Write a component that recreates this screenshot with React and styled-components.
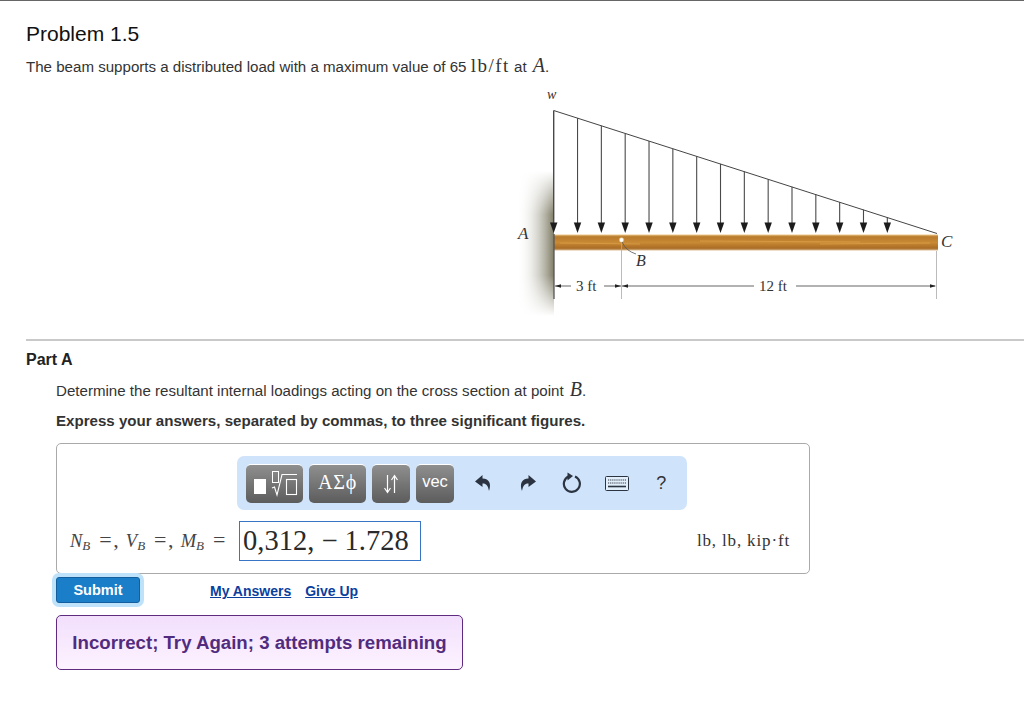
import React from "react";
import styled, { createGlobalStyle } from "styled-components";

const Global = createGlobalStyle`
  html, body { margin: 0; padding: 0; background: #fff; }
  body { font-family: "Liberation Sans", Arial, sans-serif; color: #333; }
`;
const Page = styled.div`
  width: 1024px;
  height: 702px;
  overflow: hidden;
  border-top: 1px solid #666;
  box-sizing: border-box;
`;
const Header = styled.header`
  padding-left: 26px;
`;
const Title = styled.h1`
  margin: 21px 0 0;
  font-size: 21px;
  line-height: 24px;
  font-weight: 400;
  color: #111;
`;
const Description = styled.p`
  margin: 10px 0 0;
  height: 21px;
  font-size: 15.1px;
  line-height: 21px;
  color: #333;
`;
const Math = styled.span`
  font-family: "Liberation Serif", serif;
  font-size: ${(p) => (p.$roman ? 19 : 20)}px;
  font-style: ${(p) => (p.$roman ? "normal" : "italic")};
  letter-spacing: ${(p) => (p.$roman ? "1.5px" : "0")};
  margin-left: ${(p) => (p.$roman ? "0" : "2px")};
  line-height: 0;
  color: #333;
`;
const FigureRow = styled.figure`
  margin: 4px 0 0 500px;
  width: 470px;
  height: 240px;
  svg { display: block; }
`;
const Divider = styled.hr`
  margin: 18px 0 0 26px;
  border: 0;
  height: 2px;
  background: #c9c9c9;
`;
const Part = styled.section`
  padding-left: 26px;
`;
const PartTitle = styled.h2`
  margin: 10px 0 0;
  font-size: 16px;
  line-height: 18px;
  font-weight: 700;
  color: #222;
`;
const Body = styled.div`
  padding-left: 30px;
`;
const Prompt = styled.p`
  margin: ${(p) => p.$top}px 0 0;
  height: 20px;
  font-size: 15.1px;
  line-height: 20px;
  font-weight: ${(p) => (p.$bold ? 700 : 400)};
  color: #333;
`;
const AnswerBox = styled.div`
  margin-top: 12px;
  width: 754px;
  height: 131px;
  box-sizing: border-box;
  border: 1px solid #aaa;
  border-radius: 5px;
  padding-top: 12px;
`;
const Toolbar = styled.div`
  margin-left: 180px;
  width: 450px;
  height: 54px;
  box-sizing: border-box;
  background: #cfe4fb;
  border-radius: 7px;
  display: flex;
  align-items: center;
  padding-left: 9px;
`;
const ToolButton = styled.div`
  width: ${(p) => p.$w}px;
  height: 39px;
  margin-right: ${(p) => p.$gap}px;
  padding-bottom: ${(p) => p.$lift || 0}px;
  box-sizing: border-box;
  border-radius: 5px;
  border-top: 1px solid #fff;
  background: linear-gradient(#8f8f8f, #5c5c5c);
  color: #fff;
  display: flex;
  align-items: center;
  justify-content: center;
  font-family: ${(p) => (p.$serif ? '"Liberation Serif", serif' : '"Liberation Sans", sans-serif')};
  font-size: ${(p) => p.$fs || 15}px;
  letter-spacing: ${(p) => (p.$serif ? "0.8px" : "0")};
`;
const ToolActions = styled.div`
  display: flex;
  align-items: center;
  margin-left: 7px;
`;
const ActionIcon = styled.div`
  width: 44.5px;
  height: 39px;
  display: flex;
  align-items: center;
  justify-content: center;
  font-size: 18px;
  color: #333;
`;
const InputRow = styled.div`
  display: flex;
  align-items: center;
  margin-top: 11px;
  padding: 0 19px 0 13px;
`;
const EqLabel = styled.div`
  width: 169px;
  font-family: "Liberation Serif", serif;
  font-size: 18.5px;
  font-style: italic;
  color: #444;
  white-space: nowrap;
  sub { font-size: 13px; vertical-align: -3px; line-height: 0; margin-right: 9px; }
`;
const Eq = styled.span`
  font-style: normal;
  font-size: 22px;
  line-height: 0;
  letter-spacing: 1.5px;
  margin-right: 1px;
`;
const AnswerInput = styled.div`
  width: 182px;
  height: 40px;
  box-sizing: border-box;
  border: 1px solid #3a74c4;
  padding-left: 3px;
  font-family: "Liberation Serif", serif;
  font-size: 28.5px;
  line-height: 38px;
  color: #2a2a2a;
  white-space: nowrap;
`;
const Units = styled.div`
  margin-left: auto;
  font-family: "Liberation Serif", serif;
  font-size: 17px;
  letter-spacing: 0.85px;
  color: #333;
`;
const Actions = styled.div`
  display: flex;
  align-items: center;
  margin-top: 3px;
  height: 26px;
`;
const Submit = styled.button`
  width: 84px;
  height: 26px;
  box-sizing: border-box;
  padding: 0;
  border: 1px solid #135f9d;
  border-radius: 3px;
  background: #1a7ec8;
  color: #fff;
  font: 700 14.5px "Liberation Sans", sans-serif;
  box-shadow: 0 0 0 4px #bfe2fb;
`;
const Links = styled.div`
  display: flex;
  gap: 14px;
  margin-left: 70px;
  padding-top: 2px;
`;
const TextLink = styled.a`
  font-size: 14px;
  font-weight: 700;
  color: #0b3f9e;
  text-decoration: underline;
`;
const Alert = styled.div`
  margin-top: 12px;
  width: 407px;
  height: 55px;
  box-sizing: border-box;
  border: 1px solid #5f2b80;
  border-radius: 5px;
  background: linear-gradient(#f2dffc, #fdf3ff);
  display: flex;
  align-items: center;
  justify-content: center;
  font-size: 18.65px;
  font-weight: 700;
  color: #512c7e;
  white-space: nowrap;
`;

const arrowXs = Array.from({ length: 15 }, (_, i) => 553.7 + i * 23.83);

const BeamFigure = () => (
  <svg width="470" height="240" viewBox="500 80 470 240">
    <defs>
      <linearGradient id="wallH" x1="0" x2="1" y1="0" y2="0">
        <stop offset="0" stopColor="#fff" stopOpacity="0" />
        <stop offset="1" stopColor="#77745c" stopOpacity="0.95" />
      </linearGradient>
      <linearGradient id="wallFade" x1="0" x2="0" y1="0" y2="1">
        <stop offset="0" stopColor="#fff" stopOpacity="1" />
        <stop offset="0.3" stopColor="#fff" stopOpacity="0" />
        <stop offset="0.72" stopColor="#fff" stopOpacity="0" />
        <stop offset="1" stopColor="#fff" stopOpacity="1" />
      </linearGradient>
      <linearGradient id="wood" x1="0" x2="0" y1="0" y2="1">
        <stop offset="0" stopColor="#eec98a" />
        <stop offset="0.14" stopColor="#b97b2c" />
        <stop offset="0.5" stopColor="#c88a34" />
        <stop offset="0.86" stopColor="#a96c24" />
        <stop offset="1" stopColor="#dcbc94" />
      </linearGradient>
      <filter id="soft"><feGaussianBlur stdDeviation="0.35" /></filter>
    </defs>
    <rect x="517" y="170" width="37" height="145" fill="url(#wallH)" />
    <rect x="517" y="170" width="37" height="145" fill="url(#wallFade)" />
    <g filter="url(#soft)">
      <rect x="554" y="233.5" width="384" height="16" fill="url(#wood)" />
      <g stroke="#dfa24a" strokeWidth="1" opacity="0.7">
        <line x1="560" y1="242" x2="640" y2="243" />
        <line x1="700" y1="240" x2="860" y2="241" />
        <line x1="820" y1="243" x2="930" y2="242" />
      </g>
      <line x1="553.7" y1="109.5" x2="937" y2="232.5" stroke="#444" strokeWidth="1" />
      {arrowXs.map((x, i) => (
        <g key={x}>
          <line x1={x} y1={109.5 + i * 7.63} x2={x} y2="224" stroke="#4a4a4a" strokeWidth={i === 0 ? 1.4 : 1.1} />
          <polygon points={`${x - 3.7},221.5 ${x + 3.7},221.5 ${x},232`} fill="#1c1c1c" />
        </g>
      ))}
      <line x1="554" y1="233" x2="554" y2="298" stroke="#555" strokeWidth="1.3" />
      <line x1="621.5" y1="240" x2="621.5" y2="298" stroke="#aaa" strokeWidth="0.8" />
      <line x1="936.5" y1="250" x2="936.5" y2="298" stroke="#aaa" strokeWidth="0.8" />
      <circle cx="621.5" cy="239" r="2.4" fill="#fff" stroke="#c89030" strokeWidth="0.5" />
      <path d="M622 241 Q626 250 636 253" fill="none" stroke="#555" strokeWidth="0.8" />
      <g stroke="#555" strokeWidth="0.9">
        <line x1="555" y1="285" x2="571" y2="285" />
        <line x1="604" y1="285" x2="621" y2="285" />
        <line x1="622" y1="285" x2="754" y2="285" />
        <line x1="796" y1="285" x2="935" y2="285" />
      </g>
      <g fill="#222">
        <polygon points="555,285 561,283.3 561,286.7" />
        <polygon points="621,285 615,283.3 615,286.7" />
        <polygon points="622,285 628,283.3 628,286.7" />
        <polygon points="936,285 930,283.3 930,286.7" />
      </g>
    </g>
    <g fontFamily="'Liberation Serif', serif" fill="#333">
      <text x="547" y="98" fontSize="14" fontStyle="italic">w</text>
      <text x="518" y="238" fontSize="17" fontStyle="italic">A</text>
      <text x="941" y="246" fontSize="17" fontStyle="italic">C</text>
      <text x="636" y="265" fontSize="16" fontStyle="italic">B</text>
      <text x="576" y="290" fontSize="15">3 ft</text>
      <text x="759" y="290" fontSize="15">12 ft</text>
    </g>
  </svg>
);

const TemplateIcon = () => (
  <svg width="57" height="38" viewBox="0 1 57 38" fill="none" stroke="#fff">
    <rect x="8" y="15" width="12" height="15" fill="#fff" stroke="none" />
    <rect x="26.5" y="7.5" width="6" height="11" strokeWidth="1" />
    <path d="M26 24 L28.5 23 L31 31 L36 10.5 H51" strokeWidth="1.1" />
    <rect x="40.5" y="15.5" width="10" height="15" strokeWidth="1.1" />
  </svg>
);
const ArrowsIcon = () => (
  <svg width="16" height="20" viewBox="0 0 16 20" fill="none" stroke="#fff" strokeWidth="1.2">
    <path d="M4.5 1 V18 M1.5 14 L4.5 18.5 L7.5 14" />
    <path d="M11.5 19 V2 M8.5 6 L11.5 1.5 L14.5 6" />
  </svg>
);
const Undo = () => (
  <svg width="18" height="20" viewBox="0 0 18 20">
    <path d="M8.5 2 L1 8.5 L8.5 14 V10.5 C12 10.3 14 12.5 15 18 C17.5 11 15.5 6 8.5 5.6 Z" fill="#2b3440" />
  </svg>
);
const Redo = () => (
  <svg width="18" height="20" viewBox="0 0 18 20">
    <path d="M9.5 2 L17 8.5 L9.5 14 V10.5 C6 10.3 4 12.5 3 18 C0.5 11 2.5 6 9.5 5.6 Z" fill="#2b3440" />
  </svg>
);
const Refresh = () => (
  <svg width="20" height="22" viewBox="0 0 20 22" fill="none">
    <path d="M6.5 4.6 A8 8 0 1 0 13 4.5" stroke="#2b3440" strokeWidth="2.2" />
    <path d="M5.5 0.5 L11 4 L5.5 8.5 Z" fill="#2b3440" />
  </svg>
);
const Keyboard = () => (
  <svg width="24" height="15" viewBox="0 0 24 15" fill="none">
    <rect x="0.5" y="0.5" width="23" height="14" rx="1" fill="#e3eefb" stroke="#2b3440" />
    <path d="M3 4 H21 M3 7 H21" stroke="#2b3440" strokeWidth="1.2" strokeDasharray="1.2 0.9" />
    <path d="M3 10.5 H21" stroke="#2b3440" strokeWidth="1.6" />
  </svg>
);

export default function App() {
  return (
    <Page>
      <Global />
      <Header>
        <Title>Problem 1.5</Title>
        <Description>
          The beam supports a distributed load with a maximum value of 65{" "}
          <Math $roman>lb/ft</Math> at <Math>A</Math>.
        </Description>
      </Header>
      <FigureRow>
        <BeamFigure />
      </FigureRow>
      <Divider />
      <Part>
        <PartTitle>Part A</PartTitle>
        <Body>
          <Prompt $top={12}>
            Determine the resultant internal loadings acting on the cross section at point <Math>B</Math>.
          </Prompt>
          <Prompt $top={10} $bold>
            Express your answers, separated by commas, to three significant figures.
          </Prompt>
          <AnswerBox>
            <Toolbar>
              <ToolButton $w={57} $gap={6}><TemplateIcon /></ToolButton>
              <ToolButton $w={57} $gap={6} $serif $fs={20} $lift={2}>ΑΣϕ</ToolButton>
              <ToolButton $w={38} $gap={6}><ArrowsIcon /></ToolButton>
              <ToolButton $w={38} $gap={0} $fs={16.5} $lift={4}>vec</ToolButton>
              <ToolActions>
                <ActionIcon><Undo /></ActionIcon>
                <ActionIcon><Redo /></ActionIcon>
                <ActionIcon><Refresh /></ActionIcon>
                <ActionIcon><Keyboard /></ActionIcon>
                <ActionIcon>?</ActionIcon>
              </ToolActions>
            </Toolbar>
            <InputRow>
              <EqLabel>
                N<sub>B</sub><Eq>=,</Eq> V<sub>B</sub><Eq>=,</Eq> M<sub>B</sub><Eq>=</Eq>
              </EqLabel>
              <AnswerInput>0,312, − 1.728</AnswerInput>
              <Units>lb, lb, kip·ft</Units>
            </InputRow>
          </AnswerBox>
          <Actions>
            <Submit>Submit</Submit>
            <Links>
              <TextLink>My Answers</TextLink>
              <TextLink>Give Up</TextLink>
            </Links>
          </Actions>
          <Alert>Incorrect; Try Again; 3 attempts remaining</Alert>
        </Body>
      </Part>
    </Page>
  );
}
